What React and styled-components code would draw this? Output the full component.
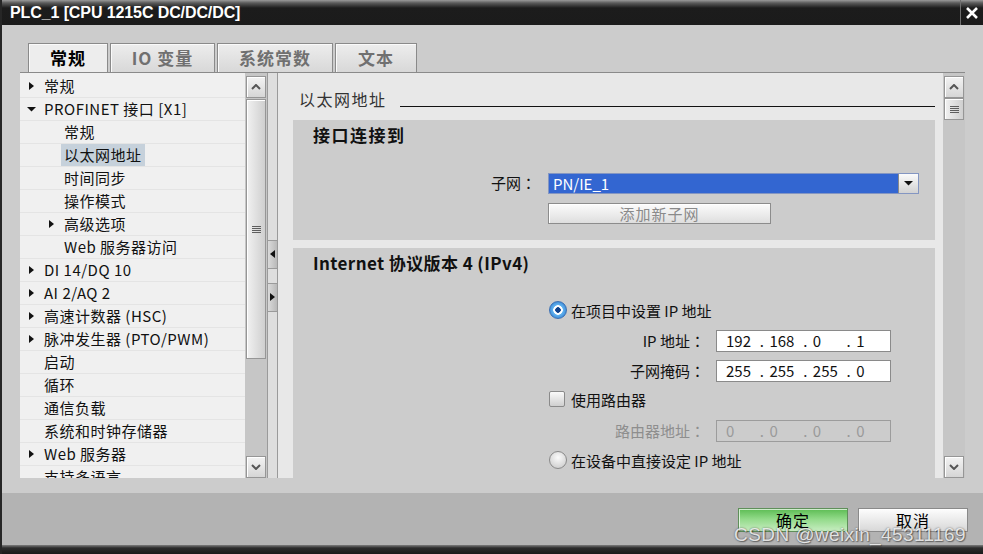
import React from 'react';
import styled, { createGlobalStyle } from 'styled-components';

const GlobalStyle = createGlobalStyle`
  html, body {
    margin: 0;
    padding: 0;
    background: #cccccc;
  }
  body {
    font-family: "Noto Sans CJK SC", "Liberation Sans", sans-serif;
    color: #111;
  }
`;

const Window = styled.div`
  position: relative;
  width: 983px;
  height: 554px;
  box-sizing: border-box;
  border-left: 2px solid #262626;
  background: #cccccc;
  display: flex;
  flex-direction: column;
  overflow: hidden;
`;

const TitleBar = styled.div`
  height: 25px;
  flex: none;
  display: flex;
  align-items: center;
  background: linear-gradient(#9a9a9a 0, #5a5a5a 3px, #1c1c1c 8px, #1b1b1b 100%);
  color: #fff;
`;

const Title = styled.div`
  flex: 1;
  padding-left: 8px;
  font: bold 16px/25px "Liberation Sans", sans-serif;
  letter-spacing: -0.1px;
`;

const CloseBox = styled.div`
  width: 22px;
  height: 25px;
  border-left: 1px solid #6e6e6e;
  display: flex;
  align-items: center;
  justify-content: center;
`;

const TabBar = styled.div`
  display: flex;
  gap: 2px;
  height: 29px;
  margin: 18px 0 0 26px;
  flex: none;
`;

const Tab = styled.div`
  width: ${p => p.$w}px;
  height: 29px;
  box-sizing: border-box;
  border: 1px solid #8a8a8a;
  border-bottom: none;
  box-shadow: inset 1px 1px 0 #fafafa;
  background: ${p => (p.$active ? '#ededed' : 'linear-gradient(#ededed, #d8d8d8)')};
  color: ${p => (p.$active ? '#000' : '#707070')};
  font-size: 17px;
  font-weight: 700;
  letter-spacing: 1px;
  display: flex;
  align-items: center;
  justify-content: center;
  padding-bottom: 2px;
`;

const Frame = styled.div`
  margin-left: 18px;
  width: 945px;
  height: 406px;
  box-sizing: border-box;
  border-top: 1px solid #8a8a8a;
  display: flex;
  flex: none;
  overflow: hidden;
`;

const Tree = styled.div`
  width: 225px;
  flex: none;
  background: #f0f0f0;
  padding-top: 2px;
  overflow: hidden;
`;

const TreeRow = styled.div`
  height: 23px;
  box-sizing: border-box;
  border-bottom: 1px solid #e4e4e4;
  display: flex;
  align-items: center;
  padding-left: ${p => 4 + p.$level * 20}px;
`;

const ArrowBox = styled.span`
  width: 14px;
  margin-right: 6px;
  flex: none;
  display: flex;
  align-items: center;
  justify-content: center;
`;

const TreeText = styled.span`
  font-size: 15px;
  line-height: 22px;
  letter-spacing: 0.5px;
  white-space: nowrap;
  padding: 0 3px;
  margin-left: -3px;
  background: ${p => (p.$selected ? '#c6d1db' : 'transparent')};
`;

const ScrollTrack = styled.div`
  width: 22px;
  flex: none;
  box-sizing: border-box;
  background: #c6c6c6;
  padding: 3px 1px 0;
  display: flex;
  flex-direction: column;
`;

const ScrollButton = styled.div`
  height: 22px;
  flex: none;
  box-sizing: border-box;
  border: 1px solid #969696;
  background: linear-gradient(#f3f3f3, #d6d6d6);
  box-shadow: inset 1px 1px 0 #fff;
  display: flex;
  align-items: center;
  justify-content: center;
`;

const ScrollThumb = styled.div`
  height: ${p => p.$h}px;
  margin-top: ${p => p.$gap}px;
  flex: none;
  box-sizing: border-box;
  border: 1px solid #969696;
  background: linear-gradient(to right, #f1f1f1, #cfcfcf);
  box-shadow: inset 1px 1px 0 #fff;
  display: flex;
  align-items: center;
  justify-content: center;
`;

const Grip = styled.div`
  width: 9px;
  height: 7px;
  background: repeating-linear-gradient(#5e5e5e 0 1px, transparent 1px 2px);
`;

const Spacer = styled.div`
  flex: 1;
`;

const Splitter = styled.div`
  width: 11px;
  flex: none;
  box-sizing: border-box;
  background: #dedede;
  border-left: 1px solid #9a9a9a;
  border-right: 1px solid #9a9a9a;
  display: flex;
  flex-direction: column;
  justify-content: center;
  gap: 14px;
`;

const SplitButton = styled.div`
  height: 29px;
  box-sizing: border-box;
  border-top: 1px solid #9a9a9a;
  border-bottom: 1px solid #9a9a9a;
  background: linear-gradient(to right, #dadada, #b9b9b9);
  display: flex;
  align-items: center;
  justify-content: center;
`;

const Panel = styled.div`
  width: 665px;
  flex: none;
  box-sizing: border-box;
  background: #e8e8e8;
  padding: 15px 8px 0 15px;
  overflow: hidden;
`;

const HeaderRow = styled.div`
  height: 22px;
  display: flex;
  align-items: flex-end;
  margin-bottom: 10px;
  padding-left: 6px;
`;

const HeaderText = styled.span`
  font-size: 16px;
  line-height: 22px;
  letter-spacing: 1.5px;
  color: #333;
  margin-right: 13px;
`;

const HeaderLine = styled.div`
  flex: 1;
  height: 1px;
  background: #111;
  margin-bottom: 3px;
`;

const Section = styled.div`
  background: #cccccc;
  padding: 4px 0 ${p => p.$pb}px;
  margin-bottom: 8px;
`;

const SectionTitle = styled.div`
  padding-left: 20px;
  font-size: 17px;
  font-weight: 700;
  line-height: 22px;
  letter-spacing: ${p => p.$ls}px;
  color: #111;
`;

const FormRow = styled.div`
  display: grid;
  grid-template-columns: ${p => p.$label}px auto;
  column-gap: ${p => p.$gap}px;
  align-items: center;
  justify-content: start;
  margin-top: ${p => p.$mt}px;
`;

const Label = styled.span`
  text-align: right;
  font-size: 15px;
  line-height: 22px;
  color: ${p => (p.$muted ? '#8e8e8e' : '#111')};
`;

const Colon = styled.span`
  font-family: "Noto Sans CJK TC", sans-serif;
  margin-right: -5px;
`;

const Select = styled.div`
  width: 371px;
  height: 21px;
  box-sizing: border-box;
  border: 1px solid #8496c2;
  background: #3366d1;
  display: flex;
`;

const SelectText = styled.span`
  flex: 1;
  padding-left: 4px;
  color: #fff;
  font-size: 15px;
  line-height: 19px;
`;

const SelectArrow = styled.div`
  width: 19px;
  border-left: 1px solid #8a8a8a;
  background: linear-gradient(#fbfbfb, #d2d2d2);
  display: flex;
  align-items: center;
  justify-content: center;
`;

const PushButton = styled.div`
  width: 223px;
  height: 21px;
  box-sizing: border-box;
  border: 1px solid #8c8c8c;
  background: linear-gradient(#fcfcfc, #dedede);
  box-shadow: inset 1px 1px 0 #fff;
  color: #8a8a8a;
  font-size: 15px;
  line-height: 19px;
  letter-spacing: 1px;
  text-align: center;
`;

const OptionRow = styled.div`
  height: ${p => p.$h}px;
  margin-top: ${p => p.$mt}px;
  padding-left: 256px;
  display: flex;
  align-items: center;
  gap: ${p => p.$gap}px;
  font-size: 15px;
`;

const Radio = styled.span`
  width: 18px;
  height: 18px;
  flex: none;
  box-sizing: border-box;
  border-radius: 50%;
  border: 1px solid ${p => (p.$checked ? '#3b70b4' : '#8a8a8a')};
  background: ${p =>
    p.$checked
      ? 'radial-gradient(circle, #0d3f88 0 2.5px, #ffffff 3px 4.5px, #64b4f0 5px, #1f6cc4 100%)'
      : 'radial-gradient(circle at 50% 35%, #fbfbfb, #c6c6c6)'};
`;

const Checkbox = styled.span`
  width: 16px;
  height: 16px;
  flex: none;
  box-sizing: border-box;
  border: 1px solid #8a8a8a;
  border-radius: 2px;
  background: linear-gradient(#fafafa, #cfcfcf);
`;

const IpBox = styled.div`
  width: 175px;
  height: 22px;
  box-sizing: border-box;
  border: 1px solid ${p => (p.$disabled ? '#9c9c9c' : '#8a8a8a')};
  background: ${p => (p.$disabled ? 'transparent' : '#fff')};
  color: ${p => (p.$disabled ? '#9a9a9a' : '#111')};
  padding-left: 9px;
  display: flex;
  font-size: 15px;
  line-height: 20px;
`;

const Octet = styled.span`
  width: 35px;
`;

const Dot = styled.span`
  width: 10px;
`;

const Footer = styled.div`
  margin-top: 15px;
  height: 52px;
  flex: none;
  box-sizing: border-box;
  background: #b3b3b3;
  display: flex;
  justify-content: flex-end;
  align-items: flex-start;
  gap: 10px;
  padding: 15px 15px 0 0;
`;

const DialogButton = styled.div`
  width: 110px;
  height: 24px;
  box-sizing: border-box;
  border: 1px solid ${p => (p.$primary ? '#5f8f5a' : '#8a8a8a')};
  background: ${p =>
    p.$primary
      ? 'linear-gradient(#5cbc53, #92da89 45%, #c7edc1 100%)'
      : 'linear-gradient(#fdfdfd, #d8d8d8)'};
  box-shadow: inset 1px 1px 0 rgba(255, 255, 255, 0.7);
  font-size: 16px;
  line-height: 22px;
  text-align: center;
  color: #000;
  letter-spacing: 1px;
`;

const BottomEdge = styled.div`
  height: 9px;
  flex: none;
  background: linear-gradient(#7c7c7c 0, #2c2c2c 3px, #1a1a1a 100%);
`;

const Watermark = styled.div`
  position: absolute;
  right: 17px;
  bottom: 10px;
  font: 19px/19px "Liberation Sans", sans-serif;
  letter-spacing: 0.4px;
  color: rgba(255, 255, 255, 0.82);
  text-shadow: 0 0 2px rgba(0, 0, 0, 0.55), 1px 1px 1px rgba(0, 0, 0, 0.35);
  white-space: nowrap;
`;

const Chevron = ({ dir }) => (
  <svg width="10" height="6" viewBox="0 0 10 6">
    <polyline
      points={dir === 'up' ? '1,5 5,1 9,5' : '1,1 5,5 9,1'}
      fill="none"
      stroke="#555"
      strokeWidth="2"
    />
  </svg>
);

const Caret = ({ dir }) => {
  if (dir === 'down') {
    return (
      <svg width="9" height="5" viewBox="0 0 9 5">
        <polygon points="0,0 9,0 4.5,4.5" fill="#111" />
      </svg>
    );
  }
  if (dir === 'left') {
    return (
      <svg width="5" height="8" viewBox="0 0 5 8">
        <polygon points="5,0 5,8 0,4" fill="#111" />
      </svg>
    );
  }
  return (
    <svg width="5" height="8" viewBox="0 0 5 8">
      <polygon points="0,0 5,4 0,8" fill="#111" />
    </svg>
  );
};

const CloseIcon = () => (
  <svg width="14" height="14" viewBox="0 0 14 14">
    <path d="M2 2 L12 12 M12 2 L2 12" stroke="#fff" strokeWidth="2.6" />
  </svg>
);

const treeItems = [
  { label: '常规', level: 0, arrow: 'right' },
  { label: 'PROFINET 接口 [X1]', level: 0, arrow: 'down' },
  { label: '常规', level: 1 },
  { label: '以太网地址', level: 1, selected: true },
  { label: '时间同步', level: 1 },
  { label: '操作模式', level: 1 },
  { label: '高级选项', level: 1, arrow: 'right' },
  { label: 'Web 服务器访问', level: 1 },
  { label: 'DI 14/DQ 10', level: 0, arrow: 'right' },
  { label: 'AI 2/AQ 2', level: 0, arrow: 'right' },
  { label: '高速计数器 (HSC)', level: 0, arrow: 'right' },
  { label: '脉冲发生器 (PTO/PWM)', level: 0, arrow: 'right' },
  { label: '启动', level: 0 },
  { label: '循环', level: 0 },
  { label: '通信负载', level: 0 },
  { label: '系统和时钟存储器', level: 0 },
  { label: 'Web 服务器', level: 0, arrow: 'right' },
  { label: '支持多语言', level: 0 },
];

const tabs = [
  { label: '常规', w: 80, active: true },
  { label: 'IO 变量', w: 105 },
  { label: '系统常数', w: 116 },
  { label: '文本', w: 82 },
];

const IpField = ({ parts, disabled }) => (
  <IpBox $disabled={disabled}>
    {parts.map((p, i) => (
      <React.Fragment key={i}>
        <Octet>{p}</Octet>
        {i < parts.length - 1 && <Dot>.</Dot>}
      </React.Fragment>
    ))}
  </IpBox>
);

const FieldLabel = ({ text, muted }) => (
  <Label $muted={muted}>
    {text}
    <Colon>：</Colon>
  </Label>
);

const App = () => {
  return (
    <>
      <GlobalStyle />
      <Window>
        <TitleBar>
          <Title>PLC_1 [CPU 1215C DC/DC/DC]</Title>
          <CloseBox>
            <CloseIcon />
          </CloseBox>
        </TitleBar>

        <TabBar>
          {tabs.map(t => (
            <Tab key={t.label} $w={t.w} $active={t.active}>
              {t.label}
            </Tab>
          ))}
        </TabBar>

        <Frame>
          <Tree>
            {treeItems.map((item, i) => (
              <TreeRow key={i} $level={item.level}>
                <ArrowBox>{item.arrow && <Caret dir={item.arrow} />}</ArrowBox>
                <TreeText $selected={item.selected}>{item.label}</TreeText>
              </TreeRow>
            ))}
          </Tree>

          <ScrollTrack>
            <ScrollButton>
              <Chevron dir="up" />
            </ScrollButton>
            <ScrollThumb $h={260} $gap={1}>
              <Grip />
            </ScrollThumb>
            <Spacer />
            <ScrollButton>
              <Chevron dir="down" />
            </ScrollButton>
          </ScrollTrack>

          <Splitter>
            <SplitButton>
              <Caret dir="left" />
            </SplitButton>
            <SplitButton>
              <Caret dir="right" />
            </SplitButton>
          </Splitter>

          <Panel>
            <HeaderRow>
              <HeaderText>以太网地址</HeaderText>
              <HeaderLine />
            </HeaderRow>

            <Section $pb={16}>
              <SectionTitle $ls={1.5}>接口连接到</SectionTitle>
              <FormRow $label={238} $gap={17} $mt={26}>
                <FieldLabel text="子网" />
                <Select>
                  <SelectText>PN/IE_1</SelectText>
                  <SelectArrow>
                    <Caret dir="down" />
                  </SelectArrow>
                </Select>
              </FormRow>
              <FormRow $label={238} $gap={17} $mt={9}>
                <span />
                <PushButton>添加新子网</PushButton>
              </FormRow>
            </Section>

            <Section $pb={60}>
              <SectionTitle $ls={0.4}>Internet 协议版本 4 (IPv4)</SectionTitle>
              <OptionRow $h={20} $mt={26} $gap={4}>
                <Radio $checked />
                在项目中设置 IP 地址
              </OptionRow>
              <FormRow $label={407} $gap={16} $mt={10}>
                <FieldLabel text="IP 地址" />
                <IpField parts={['192', '168', '0', '1']} />
              </FormRow>
              <FormRow $label={407} $gap={16} $mt={8}>
                <FieldLabel text="子网掩码" />
                <IpField parts={['255', '255', '255', '0']} />
              </FormRow>
              <OptionRow $h={18} $mt={8} $gap={6}>
                <Checkbox />
                使用路由器
              </OptionRow>
              <FormRow $label={407} $gap={16} $mt={12}>
                <FieldLabel text="路由器地址" muted />
                <IpField parts={['0', '0', '0', '0']} disabled />
              </FormRow>
              <OptionRow $h={20} $mt={8} $gap={4}>
                <Radio />
                在设备中直接设定 IP 地址
              </OptionRow>
            </Section>
          </Panel>

          <ScrollTrack>
            <ScrollButton>
              <Chevron dir="up" />
            </ScrollButton>
            <ScrollThumb $h={22} $gap={0}>
              <Grip />
            </ScrollThumb>
            <Spacer />
            <ScrollButton>
              <Chevron dir="down" />
            </ScrollButton>
          </ScrollTrack>
        </Frame>

        <Footer>
          <DialogButton $primary>确定</DialogButton>
          <DialogButton>取消</DialogButton>
        </Footer>
        <BottomEdge />

        <Watermark>CSDN @weixin_45311169</Watermark>
      </Window>
    </>
  );
};

export default App;
